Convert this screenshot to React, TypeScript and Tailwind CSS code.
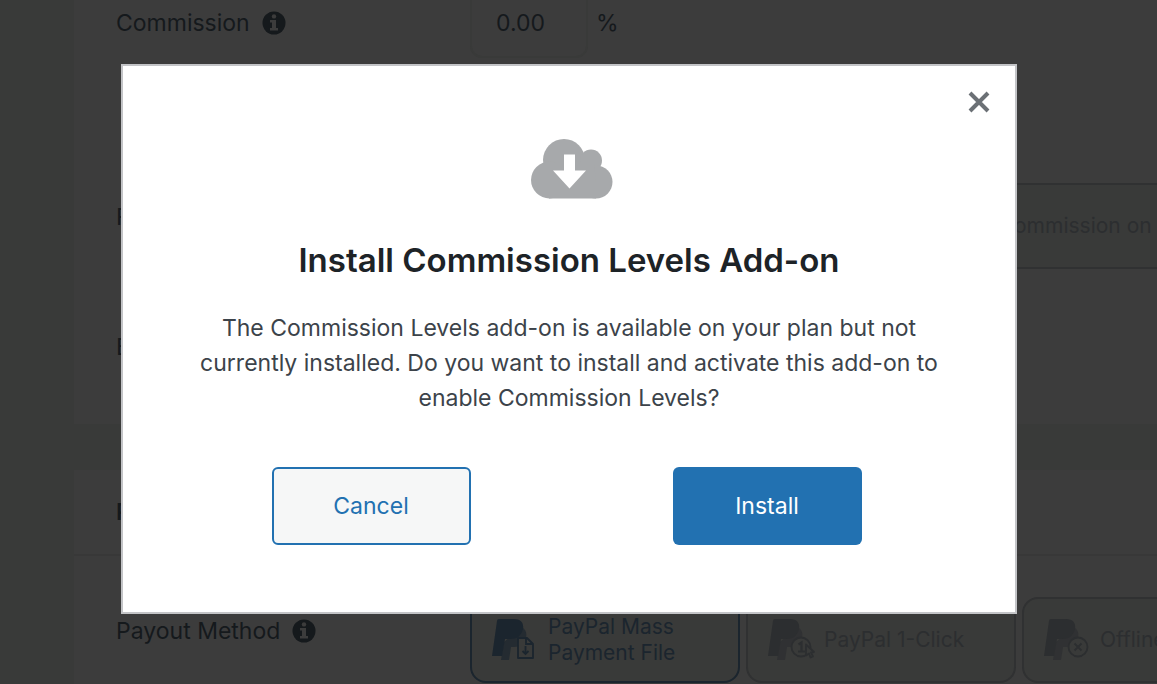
import { useState } from 'react';
import type { ReactNode } from 'react';

type Method = 'mass' | 'one-click' | 'offline';

function InfoIcon() {
  return (
    <svg viewBox="0 0 24 24" className="size-6 shrink-0 text-[#15191c]" aria-hidden="true">
      <circle cx="12" cy="12" r="11.5" fill="currentColor" />
      <circle cx="12" cy="5.4" r="2.2" fill="#3c3c3c" />
      <path d="M8 9h6v8h2v2.400H8V17h2v-5.600H8z" fill="#3c3c3c" />
    </svg>
  );
}

function CloudDownloadIcon() {
  return (
    <svg viewBox="0 0 82 60" className="ml-1.5 h-[60px] w-[82px]" aria-hidden="true">
      <g fill="#a7a9ab">
        <circle cx="33" cy="21" r="21" />
        <circle cx="60" cy="21.500" r="11" />
        <circle cx="18.500" cy="41" r="18.500" />
        <circle cx="65" cy="43" r="16.500" />
        <path d="M18 24h45l2 19v16.500H18z" />
      </g>
      <path d="M33 15.500h11v16h11L38.500 49.500 22 31.500h11z" fill="#fff" />
    </svg>
  );
}

function PayPalIcon({ method }: { method: Method }) {
  return (
    <svg
      viewBox="0 0 44 42"
      className="h-[42px] w-11 shrink-0 overflow-visible"
      fill="none"
      stroke="currentColor"
      strokeWidth="1.8"
      aria-hidden="true"
    >
      <path
        d="M30 8c4 3 5 6 4 11-2 6-6 9-12 9h-3l-2 13H9l3-18z"
        fill="currentColor"
        stroke="none"
        opacity="0.7"
      />
      <path d="M7 0h15c7 0 10 4 9 10-2 7-6 10-13 10h-5l-3 17H0L5 2Q5 0 7 0z" fill="currentColor" stroke="none" />
      {method === 'mass' && (
        <g>
          <path d="M26 19h9l6 6v14H26z" fill="#393a39" strokeLinejoin="round" />
          <path d="M34 19v6h7M33.500 27v8M30.500 32l3 3 3-3" />
        </g>
      )}
      {method === 'one-click' && (
        <g>
          <circle cx="33" cy="28" r="9.500" fill="#393a39" />
          <path d="M30.500 25.500l3-2V32M30 32.500h7" strokeWidth="2.200" />
          <path d="M38 25.500l8 7.500-3 .5 2 4-2.500 1-1.500-4-3 2z" fill="#393a39" strokeLinejoin="round" />
        </g>
      )}
      {method === 'offline' && (
        <g>
          <circle cx="34" cy="28" r="9.500" fill="#393a39" />
          <path d="M30.500 24.500l7 7M37.500 24.500l-7 7" />
        </g>
      )}
    </svg>
  );
}

interface MethodCardProps {
  method: Method;
  selected: boolean;
  onSelect: (method: Method) => void;
  children: ReactNode;
}

function MethodCard({ method, selected, onSelect, children }: MethodCardProps) {
  return (
    <label
      className={`flex h-[86px] w-[270px] shrink-0 items-center gap-3 rounded-2xl border-2 bg-[#393a39] px-5 text-[21px] leading-[26px] ${
        selected ? 'border-[#1b252e] text-[#1b252e]' : 'border-[#303132] text-[#2c2e30]'
      }`}
    >
      <input
        type="radio"
        name="payout-method"
        checked={selected}
        onChange={() => onSelect(method)}
        className="sr-only"
      />
      <PayPalIcon method={method} />
      <span>{children}</span>
    </label>
  );
}

function Settings() {
  const [method, setMethod] = useState<Method>('mass');

  return (
    <main className="-mt-3 ml-[74px] text-[23px] leading-8 text-[#15191c]">
      <section className="h-[436px] bg-[#3c3c3c] pl-[42px]">
        <div className="flex h-[70px] items-center">
          <label htmlFor="commission" className="flex w-[354px] shrink-0 items-center gap-3">
            Commission <InfoIcon />
          </label>
          <input
            id="commission"
            type="text"
            defaultValue="0.00"
            className="h-[70px] w-[118px] rounded-xl border-2 border-[#393a39] pl-6"
          />
          <span className="ml-2">%</span>
        </div>
        <div className="mt-[125px] flex h-[86px] items-start">
          <span className="w-[354px] shrink-0 pt-[18px]">Renewals</span>
          <div className="ml-[276px] flex h-[86px] w-[560px] shrink-0 items-center border-2 border-[#303132] bg-[#393a39] pl-[254px] text-[21px] whitespace-nowrap text-[#2c2e30]">
            commission on
          </div>
        </div>
        <p className="mt-[62px]">Exclude</p>
      </section>

      <section className="mt-[46px] bg-[#3c3c3c]">
        <h2 className="flex h-[86px] items-center border-b-2 border-[#383838] pl-[42px] font-semibold">
          Payouts
        </h2>
        <div className="flex items-start pt-[41px] pb-10 pl-[42px]">
          <span className="flex w-[354px] shrink-0 items-center gap-3 pt-[18px]">
            Payout Method <InfoIcon />
          </span>
          <div className="flex gap-[6px]">
            <MethodCard method="mass" selected={method === 'mass'} onSelect={setMethod}>
              PayPal Mass
              <br />
              Payment File
            </MethodCard>
            <MethodCard method="one-click" selected={method === 'one-click'} onSelect={setMethod}>
              PayPal 1-Click
            </MethodCard>
            <MethodCard method="offline" selected={method === 'offline'} onSelect={setMethod}>
              Offline
            </MethodCard>
          </div>
        </div>
      </section>
    </main>
  );
}

function InstallDialog() {
  return (
    <div className="fixed inset-0 flex items-start justify-center pt-16 pr-[19px]">
      <div
        role="dialog"
        aria-modal="true"
        aria-labelledby="install-title"
        className="relative flex w-full max-w-4xl flex-col items-center border-2 border-[#c3c4c7] bg-white px-[50px] pt-[73px] pb-[67px] text-center"
      >
        <button type="button" aria-label="Close" className="absolute top-6 right-6 text-[#6b7075]">
          <svg viewBox="0 0 24 24" className="size-6" fill="none" stroke="currentColor" strokeWidth="4" aria-hidden="true">
            <path d="M3 3l18 18M21 3L3 21" />
          </svg>
        </button>
        <CloudDownloadIcon />
        <h1 id="install-title" className="mt-[41px] text-[33px] leading-10 font-semibold text-[#1d2327]">
          Install Commission Levels Add-on
        </h1>
        <p className="mt-[31px] max-w-[760px] text-[23px] leading-[35px] text-[#3c434a]">
          The Commission Levels add-on is available on your plan but not currently installed. Do you want to install
          and activate this add-on to enable Commission Levels?
        </p>
        <div className="mt-[51px] grid w-full grid-cols-2 justify-items-center text-[23px]">
          <button
            type="button"
            className="h-[78px] w-[199px] rounded-md border-2 border-[#2271b1] bg-[#f6f7f7] text-[#2271b1]"
          >
            Cancel
          </button>
          <button type="button" className="h-[78px] w-[189px] rounded-md bg-[#2271b1] text-white">
            Install
          </button>
        </div>
      </div>
    </div>
  );
}

export default function App() {
  return (
    <div className="flow-root h-screen overflow-hidden bg-[#393a39] font-['Inter',sans-serif]">
      <Settings />
      <InstallDialog />
    </div>
  );
}
